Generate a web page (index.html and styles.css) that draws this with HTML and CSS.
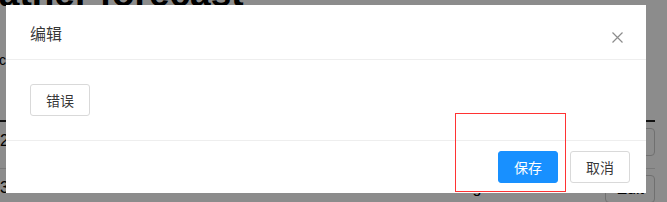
FILE: index.html
```html
<!DOCTYPE html>
<html lang="zh">
<head>
    <meta charset="UTF-8">
    <meta name="viewport" content="width=device-width, initial-scale=1.0">
    <title>Weather forecast</title>
    <link rel="stylesheet" href="styles.css">
</head>
<body>

<!-- Page behind the dialog -->
<div class="page">
    <h1>Weather forecast</h1>
    <p class="intro">c</p>
    <table class="grid">
        <thead>
            <tr><th></th><th></th><th></th><th></th><th></th></tr>
        </thead>
        <tbody>
            <tr><td>2</td><td>8</td><td>100</td><td>Mild</td><td><span class="row-btn">Edit</span></td></tr>
            <tr><td>3</td><td>12</td><td>200</td><td>Scorching</td><td><span class="row-btn">Edit</span></td></tr>
        </tbody>
    </table>
</div>

<div class="mask"></div>

<div class="modal">
    <div class="modal-header">
        <span class="modal-title">编辑</span>
        <span class="modal-close">
            <svg width="11" height="11" viewBox="0 0 11 11">
                <path d="M0.5 0.5 L10.5 10.5 M10.5 0.5 L0.5 10.5" stroke="#8c8c8c" stroke-width="1.2" fill="none"/>
            </svg>
        </span>
    </div>
    <div class="modal-body">
        <button class="btn">错误</button>
    </div>
    <div class="modal-footer">
        <button class="btn btn-primary">保存</button>
        <button class="btn">取消</button>
    </div>
</div>

<!-- debug highlight -->
<div class="highlight"></div>

</body>
</html>
```

FILE: styles.css
```css
body {
    margin: 0;
    font-family: "Liberation Sans", Arial, sans-serif;
    overflow: hidden;
    width: 667px;
    height: 202px;
    background-color: #fff;
}
.page {
    margin-left: -56px;
    width: 740px;
}
h1 {
    font-size: 37px;
    line-height: 40px;
    margin: -26px 0 0 0;
    color: #000;
}
.intro {
    margin: 38px 0 0 55px;
    font-size: 14px;
}
.grid {
    margin-left: 56px;
    margin-top: 22px;
    border-collapse: collapse;
    width: 655px;
    font-size: 16px;
}
.grid th {
    height: 28px;
    border-bottom: 2px solid #222;
    text-align: left;
}
.grid td {
    padding: 10px 0 12px 0;
    border-top: 1px solid #ddd;
    vertical-align: top;
}
.grid th:nth-child(1), .grid td:nth-child(1) { width: 128px; }
.grid th:nth-child(2), .grid td:nth-child(2) { width: 162px; }
.grid th:nth-child(3), .grid td:nth-child(3) { width: 163px; }
.grid th:nth-child(4), .grid td:nth-child(4) { width: 210px; }
.row-btn {
    display: inline-block;
    border: 1px solid #ccc;
    border-radius: 4px;
    padding: 4px 10px;
    margin-top: -4px;
}
.mask {
    position: fixed;
    top: 0;
    left: 0;
    right: 0;
    bottom: 0;
    background-color: rgba(0, 0, 0, 0.45);
}
.modal {
    position: fixed;
    top: 5px;
    left: 6px;
    width: 640px;
    height: 188px;
    background-color: #fff;
    font-family: "Noto Sans CJK SC", "Liberation Sans", sans-serif;
    color: rgba(0, 0, 0, 0.8);
    display: flex;
    flex-direction: column;
}
.modal-header {
    height: 54px;
    padding: 0 24px;
    display: flex;
    align-items: center;
    justify-content: space-between;
    border-bottom: 1px solid #eee;
}
.modal-title {
    font-size: 16px;
    line-height: 22px;
    margin-top: 2px;
}
.modal-close {
    display: flex;
    margin-top: 10px;
    margin-right: -1px;
}
.modal-body {
    padding: 24px;
    height: 32px;
}
.modal-footer {
    border-top: 1px solid #eee;
    padding: 10px 16px;
    display: flex;
    justify-content: flex-end;
    gap: 12px;
}
.btn {
    height: 32px;
    width: 60px;
    padding: 0;
    font-family: "Noto Sans CJK SC", "Liberation Sans", sans-serif;
    font-size: 14px;
    color: rgba(0, 0, 0, 0.8);
    background-color: #fff;
    border: 1px solid #d9d9d9;
    border-radius: 3px;
}
.btn-primary {
    background-color: #1890ff;
    border-color: #1890ff;
    color: #fff;
}
.highlight {
    position: fixed;
    left: 455px;
    top: 113px;
    width: 109px;
    height: 77px;
    border: 1px solid #f33;
}
```
